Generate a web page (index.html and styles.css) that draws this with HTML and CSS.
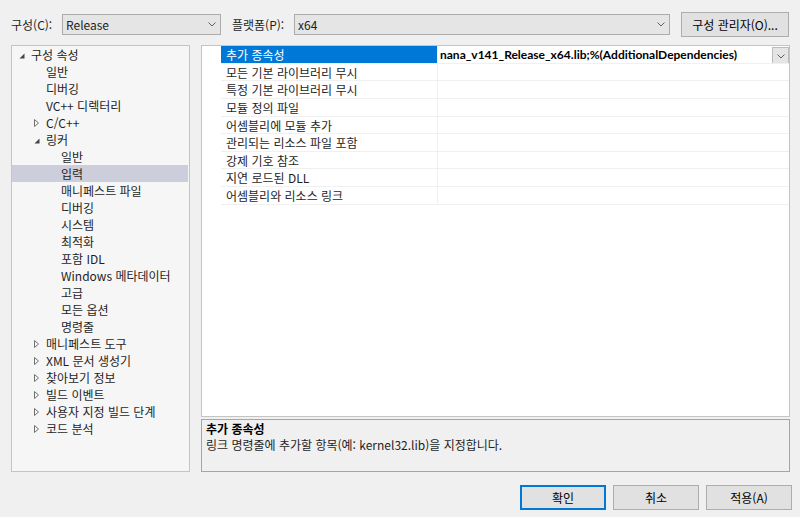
FILE: index.html
```html
<!DOCTYPE html>
<html lang="ko">
<head>
<meta charset="utf-8">
<title>속성 페이지</title>
<link rel="stylesheet" href="styles.css">
</head>
<body>
<div class="dialog">
  <div class="toolbar">
    <span class="field-label lbl-config">구성(C):</span>
    <div class="combo combo-config">
      <span class="combo-text">Release</span>
      <svg class="chevron" width="8" height="5" viewBox="0 0 8 5"><polyline points="0.5,0.5 4,4 7.5,0.5" fill="none" stroke="#606060" stroke-width="1"/></svg>
    </div>
    <span class="field-label lbl-platform">플랫폼(P):</span>
    <div class="combo combo-platform">
      <span class="combo-text">x64</span>
      <svg class="chevron" width="8" height="5" viewBox="0 0 8 5"><polyline points="0.5,0.5 4,4 7.5,0.5" fill="none" stroke="#606060" stroke-width="1"/></svg>
    </div>
    <button class="btn btn-manager">구성 관리자(O)...</button>
  </div>

  <div class="content">
    <div class="tree">
      <div class="node lvl0"><svg class="exp" width="12" height="17" viewBox="0 0 12 17"><polygon points="5.5,7.5 5.5,12.5 0.5,12.5" fill="#444"/></svg><span>구성 속성</span></div>
      <div class="node lvl1"><span class="slot"></span><span>일반</span></div>
      <div class="node lvl1"><span class="slot"></span><span>디버깅</span></div>
      <div class="node lvl1"><span class="slot"></span><span>VC++ 디렉터리</span></div>
      <div class="node lvl1"><svg class="exp" width="12" height="17" viewBox="0 0 12 17"><polygon points="0.5,5.5 0.5,12.5 4.5,9" fill="none" stroke="#707070"/></svg><span>C/C++</span></div>
      <div class="node lvl1"><svg class="exp" width="12" height="17" viewBox="0 0 12 17"><polygon points="5.5,7.5 5.5,12.5 0.5,12.5" fill="#444"/></svg><span>링커</span></div>
      <div class="node lvl2"><span class="slot"></span><span>일반</span></div>
      <div class="node lvl2 selected"><span class="slot"></span><span>입력</span></div>
      <div class="node lvl2"><span class="slot"></span><span>매니페스트 파일</span></div>
      <div class="node lvl2"><span class="slot"></span><span>디버깅</span></div>
      <div class="node lvl2"><span class="slot"></span><span>시스템</span></div>
      <div class="node lvl2"><span class="slot"></span><span>최적화</span></div>
      <div class="node lvl2"><span class="slot"></span><span>포함 IDL</span></div>
      <div class="node lvl2"><span class="slot"></span><span>Windows 메타데이터</span></div>
      <div class="node lvl2"><span class="slot"></span><span>고급</span></div>
      <div class="node lvl2"><span class="slot"></span><span>모든 옵션</span></div>
      <div class="node lvl2"><span class="slot"></span><span>명령줄</span></div>
      <div class="node lvl1"><svg class="exp" width="12" height="17" viewBox="0 0 12 17"><polygon points="0.5,5.5 0.5,12.5 4.5,9" fill="none" stroke="#707070"/></svg><span>매니페스트 도구</span></div>
      <div class="node lvl1"><svg class="exp" width="12" height="17" viewBox="0 0 12 17"><polygon points="0.5,5.5 0.5,12.5 4.5,9" fill="none" stroke="#707070"/></svg><span>XML 문서 생성기</span></div>
      <div class="node lvl1"><svg class="exp" width="12" height="17" viewBox="0 0 12 17"><polygon points="0.5,5.5 0.5,12.5 4.5,9" fill="none" stroke="#707070"/></svg><span>찾아보기 정보</span></div>
      <div class="node lvl1"><svg class="exp" width="12" height="17" viewBox="0 0 12 17"><polygon points="0.5,5.5 0.5,12.5 4.5,9" fill="none" stroke="#707070"/></svg><span>빌드 이벤트</span></div>
      <div class="node lvl1"><svg class="exp" width="12" height="17" viewBox="0 0 12 17"><polygon points="0.5,5.5 0.5,12.5 4.5,9" fill="none" stroke="#707070"/></svg><span>사용자 지정 빌드 단계</span></div>
      <div class="node lvl1"><svg class="exp" width="12" height="17" viewBox="0 0 12 17"><polygon points="0.5,5.5 0.5,12.5 4.5,9" fill="none" stroke="#707070"/></svg><span>코드 분석</span></div>
    </div>

    <div class="side">
      <div class="grid">
        <div class="prop active">
          <div class="gutter"></div>
          <div class="pname">추가 종속성</div>
          <div class="pvalue"><span class="vtext">nana_v141_Release_x64.lib;%(AdditionalDependencies)</span>
            <span class="drop"><svg width="8" height="5" viewBox="0 0 8 5"><polyline points="0.5,0.5 4,4 7.5,0.5" fill="none" stroke="#606060" stroke-width="1"/></svg></span>
          </div>
        </div>
        <div class="prop"><div class="gutter"></div><div class="pname">모든 기본 라이브러리 무시</div><div class="pvalue"></div></div>
        <div class="prop"><div class="gutter"></div><div class="pname">특정 기본 라이브러리 무시</div><div class="pvalue"></div></div>
        <div class="prop"><div class="gutter"></div><div class="pname">모듈 정의 파일</div><div class="pvalue"></div></div>
        <div class="prop"><div class="gutter"></div><div class="pname">어셈블리에 모듈 추가</div><div class="pvalue"></div></div>
        <div class="prop"><div class="gutter"></div><div class="pname">관리되는 리소스 파일 포함</div><div class="pvalue"></div></div>
        <div class="prop"><div class="gutter"></div><div class="pname">강제 기호 참조</div><div class="pvalue"></div></div>
        <div class="prop"><div class="gutter"></div><div class="pname">지연 로드된 DLL</div><div class="pvalue"></div></div>
        <div class="prop"><div class="gutter"></div><div class="pname">어셈블리와 리소스 링크</div><div class="pvalue"></div></div>
      </div>
      <div class="desc">
        <div class="desc-title">추가 종속성</div>
        <div class="desc-text">링크 명령줄에 추가할 항목(예: kernel32.lib)을 지정합니다.</div>
      </div>
    </div>
  </div>

  <div class="footer">
    <button class="btn btn-action default">확인</button>
    <button class="btn btn-action">취소</button>
    <button class="btn btn-action">적용(A)</button>
  </div>
</div>
</body>
</html>
```

FILE: styles.css
```css
* { box-sizing: border-box; }

html, body {
  margin: 0;
  padding: 0;
}

body {
  width: 800px;
  height: 517px;
  background: #f0f0f0;
  font-family: "Noto Sans CJK KR", sans-serif;
  font-size: 12px;
  color: #1e1e1e;
  overflow: hidden;
}

.dialog {
  display: flex;
  flex-direction: column;
  height: 100%;
}

/* top row: configuration / platform selectors */
.toolbar {
  display: flex;
  align-items: center;
  height: 25px;
  margin: 12px 0 0 11px;
}

.field-label {
  color: #1e1e1e;
  white-space: nowrap;
}
.lbl-config { width: 51px; }
.lbl-platform { width: 62px; margin-left: 11px; }

.combo {
  height: 21px;
  display: flex;
  align-items: center;
  justify-content: space-between;
  background: #e5e5e5;
  border: 1px solid #acacac;
  padding: 0 4px 0 3px;
}
.combo-config { width: 159px; }
.combo-platform { width: 376px; }
.combo-text { line-height: 19px; }

.btn {
  font-family: inherit;
  font-size: 12px;
  color: #000;
  background: #e1e1e1;
  border: 1px solid #adadad;
  padding: 0;
  height: 25px;
}
.btn-manager {
  width: 108px;
  margin-left: 11px;
}

/* main area: tree on the left, property grid + description on the right */
.content {
  display: flex;
  gap: 11px;
  margin: 8px 0 0 11px;
  height: 427px;
}

.tree {
  width: 179px;
  height: 100%;
  background: #f6f6f6;
  border: 1px solid #c4c4c4;
  padding-top: 0;
}

.node {
  height: 17px;
  display: flex;
  align-items: center;
  white-space: nowrap;
  line-height: 17px;
}
.node .exp,
.node .slot {
  flex: 0 0 12px;
  width: 12px;
  height: 17px;
}
.lvl0 { padding-left: 7px; }
.lvl1 { padding-left: 22px; }
.lvl2 { padding-left: 37px; }
.node.selected {
  background: #cccedb;
  margin-right: 1px;
}

.side {
  width: 589px;
  display: flex;
  flex-direction: column;
  gap: 2px;
}

.grid {
  height: 372px;
  background: #fff;
  border: 1px solid #c4c4c4;
  display: flex;
  flex-direction: column;
}

.prop {
  height: 17.625px;
  display: grid;
  grid-template-columns: 19px 217px 1fr;
  flex: 0 0 auto;
}
.prop .pname,
.prop .pvalue {
  border-bottom: 1px solid #f0f0f0;
  line-height: 17px;
  white-space: nowrap;
  overflow: hidden;
}
.pname {
  padding-left: 5px;
  border-right: 1px solid #f0f0f0;
}
.pvalue {
  padding-left: 2px;
  display: flex;
  align-items: center;
  justify-content: space-between;
}

.prop.active .pname {
  background: #0078d7;
  color: #fff;
}
.vtext {
  font-family: "Lato", "Noto Sans CJK KR", sans-serif;
  font-size: 12px;
  font-weight: bold;
  color: #000;
}
.drop {
  width: 17px;
  height: 18px;
  background: #e5e5e5;
  border: 1px solid #bcbcbc;
  display: flex;
  align-items: center;
  justify-content: center;
  align-self: flex-start;
  margin-top: 1px;
}

.desc {
  height: 53px;
  border: 1px solid #a5a5a5;
  padding: 1px 4px 0;
  line-height: 16px;
}
.desc-title {
  font-weight: bold;
  color: #000;
}
.desc-text { color: #1e1e1e; }

/* bottom buttons */
.footer {
  display: flex;
  justify-content: flex-end;
  gap: 7px;
  margin-top: 13px;
  padding-right: 8px;
}
.btn-action { width: 86px; }
.btn-action.default {
  border-color: #0078d7;
  box-shadow: inset 0 0 0 1px #0078d7;
}
```
